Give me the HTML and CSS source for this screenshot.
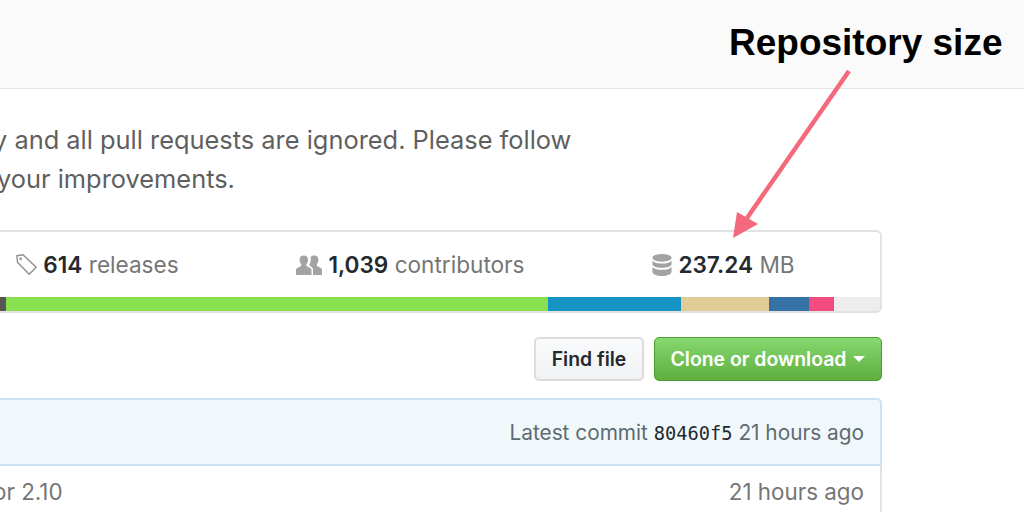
FILE: index.html
```html
<!DOCTYPE html>
<html lang="en">
<head>
<meta charset="utf-8">
<title>Repository size</title>
<link rel="stylesheet" href="styles.css">
</head>
<body>
<header class="topbar"></header>
<main class="repo">
  <p class="desc"><span class="desc-line desc-cut">y and all pull requests are ignored. Please follow</span><span class="desc-line desc-cut-small">your improvements.</span></p>
  <section class="summary">
    <ul class="stats">
      <li class="stat">
        <svg class="icon" width="21" height="21" viewBox="0 0 21 21"><path d="M0.800 1.800 7 0.800 20.200 13.200 13.200 20.200 1.500 8.300Z" fill="none" stroke="#8f8f8f" stroke-width="1.400" stroke-linejoin="round"/><circle cx="4.700" cy="4.800" r="1.500" fill="#a0a0a0"/></svg>
        <span><b>614</b> releases</span>
      </li>
      <li class="stat">
        <svg class="icon" width="26" height="20" viewBox="0 0 26 20"><path d="M0 20V14.500C0 13 3 12 4.500 11.200 5.500 10.700 5.500 9.800 5 9 3.800 7.800 3.600 6 3.600 4.500 3.600 2 5.400 0.500 7.800 0.500S12 2 12 4.500C12 6 11.800 7.800 10.600 9 10 9.800 10.100 10.700 11 11.200 12.600 12 15.500 13 15.500 14.500V20Z" fill="#a3a3a3"/><path d="M17 20H26V14.500C26 13 23 12 21.500 11.200 20.500 10.700 20.500 9.800 21 9 22.200 7.800 22.400 6 22.400 4.500 22.400 2 20.600 0.500 18.200 0.500 16.600 0.500 15.300 1.100 14.500 2.200 15 4 14.800 7 13.600 9.200 13.200 10 13.500 10.600 14.500 11.200 15.500 11.800 17 12.800 17 14.500Z" fill="#a3a3a3"/></svg>
        <span><b>1,039</b> contributors</span>
      </li>
      <li class="stat">
        <svg class="icon" width="20" height="22" viewBox="0 0 20 23"><path d="M0 4C0 1.500 4.500 0 10 0S20 1.500 20 4 15.500 8 10 8 0 6.500 0 4Z" fill="#a3a3a3"/><path d="M0 6.700C1.500 9 6 10 10 10S18.500 9 20 6.700V10.500C20 13 15.500 14.500 10 14.500S0 13 0 10.500Z" fill="#a3a3a3"/><path d="M0 13.200C1.500 15.500 6 16.500 10 16.500S18.500 15.500 20 13.200V18.500C20 21 15.500 23 10 23S0 21 0 18.500Z" fill="#a3a3a3"/></svg>
        <span><b>237.24</b> MB</span>
      </li>
    </ul>
    <div class="langs">
      <span class="lang lang-shell"></span>
      <span class="lang lang-vim"></span>
      <span class="lang lang-c"></span>
      <span class="lang lang-tan"></span>
      <span class="lang lang-py"></span>
      <span class="lang lang-pink"></span>
      <span class="lang lang-other"></span>
    </div>
  </section>
  <div class="actions">
    <button class="btn btn-plain" type="button">Find file</button>
    <button class="btn btn-green" type="button">Clone or download<i class="caret"></i></button>
  </div>
  <div class="commit">
    <span>Latest commit <code>80460f5</code> 21 hours ago</span>
  </div>
  <div class="row">
    <span class="row-msg">or 2.10</span>
    <span>21 hours ago</span>
  </div>
</main>
<aside class="note">Repository size</aside>
<svg class="arrow" width="130" height="180" viewBox="0 0 130 180"><path d="M118 1 16 148" stroke="#f4697b" stroke-width="4.500" fill="none"/><path d="M2 168 6 142 27 154Z" fill="#f4697b"/></svg>
</body>
</html>
```
FILE: styles.css
```css
html, body {
  margin: 0;
  padding: 0;
  width: 1024px;
  height: 512px;
  overflow: hidden;
  background: #fff;
  font-family: Inter, "Liberation Sans", sans-serif;
  color: #24292e;
}

.topbar {
  height: 88px;
  background: #fafafa;
  border-bottom: 1px solid #e5e5e5;
}

.repo {
  width: 882px;
  font-size: 22.6px;
}

.desc {
  margin: 31px 0 0;
  line-height: 39px;
  font-size: 25.4px;
  color: #5f5f5f;
  white-space: nowrap;
}

.desc-line { display: block; }
.desc-cut { margin-left: -7px; }
.desc-cut-small { margin-left: -3px; }

.summary {
  margin-top: 32px;
  height: 83px;
  box-sizing: border-box;
  border: 2px solid #e2e2e2;
  border-left: 0;
  border-radius: 0 6px 6px 0;
  display: flex;
  flex-direction: column;
  overflow: hidden;
}

.stats {
  list-style: none;
  margin: 0;
  padding: 0;
  flex: 1;
  display: flex;
  justify-content: flex-end;
}

.stat {
  flex: 0 0 313px;
  display: flex;
  align-items: center;
  justify-content: center;
  gap: 6px;
  color: #767676;
  white-space: nowrap;
}

.stat b {
  font-weight: 600;
  color: #24292e;
}

.langs {
  display: flex;
  justify-content: flex-end;
  height: 14px;
  background: #ededed;
}

.lang { display: block; height: 100%; }
.lang-shell { width: 6px; background: #555555; }
.lang-vim { width: 542px; background: #89e051; }
.lang-c { width: 133px; background: #1593c4; }
.lang-tan { width: 88px; background: #e3cb97; }
.lang-py { width: 40px; background: #3572a5; }
.lang-pink { width: 25px; background: #f34b7d; }
.lang-other { width: 46px; background: #ededed; }

.actions {
  margin-top: 24px;
  display: flex;
  justify-content: flex-end;
  gap: 10px;
}

.btn {
  height: 44px;
  box-sizing: border-box;
  border-radius: 5px;
  font-family: inherit;
  font-size: 19.4px;
  font-weight: 600;
  padding: 0;
  display: flex;
  align-items: center;
  justify-content: center;
}

.btn-plain {
  width: 110px;
  color: #24292e;
  background: linear-gradient(#fafbfc, #eff1f3);
  border: 2px solid #dcdcdc;
}

.btn-green {
  width: 228px;
  color: #fff;
  background: linear-gradient(#86d96f, #5fae3f);
  border: 1px solid #4f9d30;
}

.caret {
  display: inline-block;
  margin-left: 7px;
  border-style: solid;
  border-width: 6px 6px 0;
  border-color: #fff transparent transparent;
}

.commit {
  margin-top: 17px;
  height: 68px;
  box-sizing: border-box;
  padding: 0 16px;
  background: #f1f8fb;
  border: 2px solid #c9e5f3;
  border-left: 0;
  border-radius: 0 5px 0 0;
  display: flex;
  align-items: center;
  justify-content: flex-end;
  font-size: 20.8px;
  color: #5f6b72;
  white-space: nowrap;
}

.commit code {
  font-family: "DejaVu Sans Mono", "Liberation Mono", monospace;
  font-size: 18.7px;
  color: #24292e;
}

.row {
  height: 50px;
  box-sizing: border-box;
  padding: 0 16px 0 0;
  border-right: 2px solid #e2e2e2;
  display: flex;
  align-items: center;
  justify-content: space-between;
  font-size: 22.4px;
  color: #767676;
}

.row-msg { margin-left: -7px; }

.note {
  position: absolute;
  top: 22px;
  left: 729px;
  font-family: "Liberation Sans", Arial, sans-serif;
  font-size: 37px;
  font-weight: 700;
  color: #000;
  white-space: nowrap;
}

.arrow {
  position: absolute;
  left: 731px;
  top: 70px;
}
```
